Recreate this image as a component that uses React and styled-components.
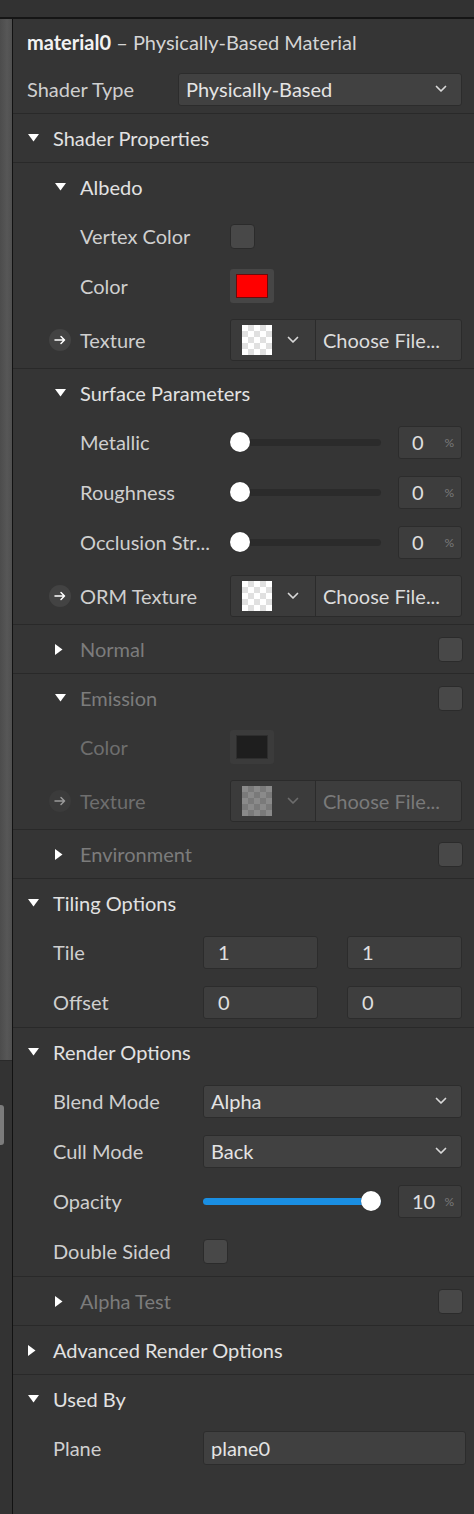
import React from "react"
import styled, { createGlobalStyle } from "styled-components"

const GlobalStyle = createGlobalStyle`
    html, body {
        margin: 0;
        padding: 0;
        background: #333333;
    }
    body {
        font-family: Lato, "Noto Sans", "Liberation Sans", sans-serif;
        -webkit-font-smoothing: antialiased;
    }
`

const indent = depth => [14, 40, 67][depth]

export default function App(){
    return(
        <Screen>
            <GlobalStyle />
            <TopBar />
            <Body>
                <Viewport>
                    <ViewportScene />
                    <ViewportFooter>
                        <Handle />
                    </ViewportFooter>
                </Viewport>
                <Panel>
                    <Title>
                        <strong>material0</strong>
                        <span>&nbsp;–&nbsp;Physically-Based Material</span>
                    </Title>
                    <Row $depth={0} $height={48}>
                        <Label $width={151}>Shader Type</Label>
                        <Select value="Physically-Based" />
                    </Row>

                    <Section title="Shader Properties" level={1}>
                        <Section title="Albedo" level={2}>
                            <Row $depth={2}>
                                <Label>Vertex Color</Label>
                                <Checkbox />
                            </Row>
                            <Row $depth={2}>
                                <Label>Color</Label>
                                <Swatch color="#ff0000" />
                            </Row>
                            <TextureRow label="Texture" />
                        </Section>

                        <Section title="Surface Parameters" level={2}>
                            <SliderRow label="Metallic" value={0} />
                            <SliderRow label="Roughness" value={0} />
                            <SliderRow label="Occlusion Str..." value={0} />
                            <TextureRow label="ORM Texture" />
                        </Section>

                        <Section title="Normal" level={2} closed dim toggle />

                        <Section title="Emission" level={2} dim toggle>
                            <Row $depth={2}>
                                <Label $dim>Color</Label>
                                <Swatch color="#1e1e1e" dim />
                            </Row>
                            <TextureRow label="Texture" dim />
                        </Section>

                        <Section title="Environment" level={2} closed dim toggle />
                    </Section>

                    <Section title="Tiling Options" level={1}>
                        <Row $depth={1}>
                            <Label>Tile</Label>
                            <Pair>
                                <Field>1</Field>
                                <Field>1</Field>
                            </Pair>
                        </Row>
                        <Row $depth={1}>
                            <Label>Offset</Label>
                            <Pair>
                                <Field>0</Field>
                                <Field>0</Field>
                            </Pair>
                        </Row>
                    </Section>

                    <Section title="Render Options" level={1}>
                        <Row $depth={1}>
                            <Label>Blend Mode</Label>
                            <Select value="Alpha" />
                        </Row>
                        <Row $depth={1}>
                            <Label>Cull Mode</Label>
                            <Select value="Back" />
                        </Row>
                        <SliderRow label="Opacity" value={100} shown="10" depth={1} />
                        <Row $depth={1}>
                            <Label>Double Sided</Label>
                            <Checkbox />
                        </Row>
                        <Section title="Alpha Test" level={2} closed dim toggle />
                    </Section>

                    <Section title="Advanced Render Options" level={1} closed />

                    <Section title="Used By" level={1}>
                        <Row $depth={1}>
                            <Label>Plane</Label>
                            <TextValue>plane0</TextValue>
                        </Row>
                    </Section>
                </Panel>
            </Body>
        </Screen>
    )
}

function Section({ title, level, closed, dim, toggle, children }){
    return(
        <SectionBox>
            <Header $level={level}>
                <Caret>
                    {closed ? (
                        <svg width="8" height="11" viewBox="0 0 8 11"><polygon points="0,0 7.5,5.5 0,11" fill="#ffffff" /></svg>
                    ) : (
                        <svg width="11" height="8" viewBox="0 0 11 8"><polygon points="0,0 11,0 5.5,7.5" fill="#ffffff" /></svg>
                    )}
                </Caret>
                <HeaderText $dim={dim}>{title}</HeaderText>
                {toggle && <Checkbox $right />}
            </Header>
            {!closed && children}
        </SectionBox>
    )
}

function Chevron({ dim }){
    return(
        <svg width="12" height="8" viewBox="0 0 12 8">
            <polyline points="1.5,1.5 6,6 10.5,1.5" fill="none" stroke={dim ? "#6d6d6d" : "#d8d8d8"} strokeWidth="1.7" strokeLinecap="round" strokeLinejoin="round" />
        </svg>
    )
}

function Select({ value }){
    return(
        <SelectBox>
            <span>{value}</span>
            <Chevron />
        </SelectBox>
    )
}

function TextureRow({ label, dim }){
    return(
        <Row $depth={2} $height={57} $linked>
            <LinkBadge $dim={dim}>
                <svg width="12" height="10" viewBox="0 0 12 10">
                    <path d="M1 5 H10.5 M7 1.5 L10.5 5 L7 8.5" fill="none" stroke={dim ? "#9a9a9a" : "#ffffff"} strokeWidth="1.5" strokeLinecap="round" strokeLinejoin="round" />
                </svg>
            </LinkBadge>
            <Label $dim={dim}>{label}</Label>
            <TextureField>
                <Preview>
                    <Checker $dim={dim} />
                    <Chevron dim={dim} />
                </Preview>
                <FileButton $dim={dim}>Choose File...</FileButton>
            </TextureField>
        </Row>
    )
}

function SliderRow({ label, value, shown, depth = 2 }){
    return(
        <Row $depth={depth}>
            <Label>{label}</Label>
            <Slider>
                <Track>
                    <Fill style={{ width: `${value}%` }} />
                </Track>
                <Thumb style={{ left: `calc(${value / 100} * (100% - 20px))` }} />
            </Slider>
            <Percent>
                <span>{shown ?? value}</span>
                <Unit>%</Unit>
            </Percent>
        </Row>
    )
}

const Screen = styled.div`
    width: 474px;
    height: 1514px;
    display: flex;
    flex-direction: column;
    overflow: hidden;
    background: #353535;
`

const TopBar = styled.div`
    height: 17px;
    flex-shrink: 0;
    background: #323232;
    border-bottom: 2px solid #151515;
`

const Body = styled.div`
    flex: 1;
    display: flex;
    min-height: 0;
`

const Viewport = styled.div`
    width: 12px;
    flex-shrink: 0;
    display: flex;
    flex-direction: column;
    border-right: 1px solid #121212;
`

const ViewportScene = styled.div`
    height: 1041px;
    background: linear-gradient(90deg, #4c4c4c 0%, #575757 60%, #4f4f4f 100%);
    border-bottom: 1px solid #2a2a2a;
`

const ViewportFooter = styled.div`
    flex: 1;
    background: #333333;
    padding-top: 44px;
`

const Handle = styled.div`
    width: 4px;
    height: 40px;
    background: #7c7c7c;
    border-radius: 0 3px 3px 0;
`

const Panel = styled.div`
    flex: 1;
    background: #353535;
    color: #d2d2d2;
    font-size: 20px;
`

const Title = styled.div`
    height: 46px;
    display: flex;
    align-items: center;
    padding-left: 14px;
    white-space: nowrap;
    color: #d4d4d4;
    strong {
        color: #f2f2f2;
        font-weight: 700;
    }
`

const SectionBox = styled.div`
    border-top: 1px solid #292929;
`

const Header = styled.div`
    height: 48px;
    display: flex;
    align-items: center;
    padding-left: ${props => indent(props.$level) - 25}px;
    padding-right: 11px;
`

const Caret = styled.div`
    width: 25px;
    display: flex;
    align-items: center;
`

const HeaderText = styled.div`
    color: ${props => props.$dim ? '#7c7c7c' : '#e2e2e2'};
`

const Row = styled.div`
    height: ${props => props.$height || 50}px;
    display: flex;
    align-items: center;
    padding-left: ${props => indent(props.$depth) - (props.$linked ? 31 : 0)}px;
    padding-right: 12px;
`

const Label = styled.div`
    width: ${props => props.$width || 150}px;
    flex-shrink: 0;
    white-space: nowrap;
    color: ${props => props.$dim ? '#6e6e6e' : '#cfcfcf'};
`

const LinkBadge = styled.div`
    width: 22px;
    height: 22px;
    margin-right: 9px;
    border-radius: 50%;
    background: ${props => props.$dim ? '#3b3b3b' : '#434343'};
    display: flex;
    align-items: center;
    justify-content: center;
`

const SelectBox = styled.div`
    flex: 1;
    height: 33px;
    box-sizing: border-box;
    display: flex;
    align-items: center;
    justify-content: space-between;
    padding: 0 14px 0 7px;
    background: #414141;
    border: 1px solid #2c2c2c;
    border-radius: 3px;
    color: #e4e4e4;
`

const Checkbox = styled.div`
    width: 25px;
    height: 25px;
    box-sizing: border-box;
    margin-left: ${props => props.$right ? 'auto' : '0'};
    background: #484848;
    border: 1px solid #2b2b2b;
    border-radius: 4px;
`

const Swatch = styled.div`
    width: 44px;
    height: 34px;
    box-sizing: border-box;
    padding: 5px 6px;
    background: ${props => props.dim ? '#3b3b3b' : '#464646'};
    border-radius: 3px;
    &::after {
        content: "";
        display: block;
        height: 100%;
        box-sizing: border-box;
        background: ${props => props.color};
        border: 1px solid ${props => props.dim ? '#2e2e2e' : '#6b0b0b'};
    }
`

const TextureField = styled.div`
    flex: 1;
    height: 40px;
    display: flex;
    border: 1px solid #2b2b2b;
    border-radius: 3px;
    overflow: hidden;
`

const Preview = styled.div`
    width: 85px;
    display: flex;
    align-items: center;
    gap: 15px;
    padding-left: 11px;
    box-sizing: border-box;
    background: #3b3b3b;
    border-right: 1px solid #2b2b2b;
`

const Checker = styled.div`
    width: 30px;
    height: 30px;
    background-color: ${props => props.$dim ? '#8a8a8a' : '#ffffff'};
    background-image:
        linear-gradient(45deg, ${props => props.$dim ? '#7a7a7a' : '#e0e0e0'} 25%, transparent 25%, transparent 75%, ${props => props.$dim ? '#7a7a7a' : '#e0e0e0'} 75%),
        linear-gradient(45deg, ${props => props.$dim ? '#7a7a7a' : '#e0e0e0'} 25%, transparent 25%, transparent 75%, ${props => props.$dim ? '#7a7a7a' : '#e0e0e0'} 75%);
    background-size: 12px 12px;
    background-position: 0 0, 6px 6px;
`

const FileButton = styled.div`
    flex: 1;
    display: flex;
    align-items: center;
    padding-left: 7px;
    background: #3d3d3d;
    white-space: nowrap;
    color: ${props => props.$dim ? '#7a7a7a' : '#dcdcdc'};
`

const Slider = styled.div`
    position: relative;
    flex: 1;
    height: 20px;
    display: flex;
    align-items: center;
    margin-right: 17px;
`

const Track = styled.div`
    flex: 1;
    height: 7px;
    border-radius: 4px;
    background: #2b2b2b;
    overflow: hidden;
`

const Fill = styled.div`
    height: 100%;
    background: #1a8fe3;
`

const Thumb = styled.div`
    position: absolute;
    top: 0;
    width: 20px;
    height: 20px;
    border-radius: 50%;
    background: #ffffff;
    box-shadow: 0 0 1px rgba(0, 0, 0, 0.6);
`

const Percent = styled.div`
    width: 64px;
    height: 33px;
    box-sizing: border-box;
    display: flex;
    align-items: center;
    justify-content: space-between;
    padding: 0 7px 0 13px;
    background: #3d3d3d;
    border: 1px solid #2c2c2c;
    border-radius: 3px;
    color: #e0e0e0;
`

const Unit = styled.span`
    font-size: 12px;
    color: #7a7a7a;
`

const Pair = styled.div`
    flex: 1;
    display: grid;
    grid-template-columns: 1fr 1fr;
    gap: 29px;
`

const Field = styled.div`
    height: 33px;
    box-sizing: border-box;
    display: flex;
    align-items: center;
    padding-left: 14px;
    background: #3e3e3e;
    border: 1px solid #2c2c2c;
    border-radius: 3px;
    color: #e0e0e0;
`

const TextValue = styled.div`
    flex: 1;
    height: 34px;
    margin-right: -4px;
    box-sizing: border-box;
    display: flex;
    align-items: center;
    padding-left: 7px;
    background: #404040;
    border: 1px solid #2c2c2c;
    border-radius: 3px;
    color: #e4e4e4;
`
